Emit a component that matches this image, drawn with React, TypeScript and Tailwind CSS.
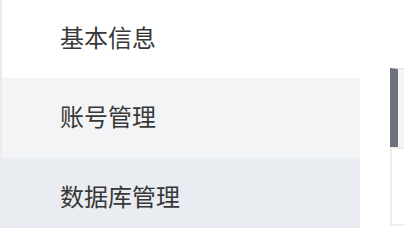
import React from "react";

const items = [
  { label: "基本信息", bg: "bg-white", h: "h-[78px]" },
  { label: "账号管理", bg: "bg-[#f3f4f6]", h: "h-20" },
  { label: "数据库管理", bg: "bg-[#e9ecf0]", h: "h-20" },
];

export default function App() {
  return (
    <div
      className="flex w-[404px] h-[228px] overflow-hidden bg-white text-[#383838]"
      style={{ fontFamily: '"Noto Sans CJK SC", "Noto Sans", sans-serif' }}
    >
      <div className="flex flex-col w-[360px] shrink-0 border-l-2 border-[#ebebeb]">
        {items.map((it) => (
          <div
            key={it.label}
            className={`flex items-center shrink-0 pl-[58px] pb-[4px] text-[24px] leading-none ${it.bg} ${it.h}`}
          >
            {it.label}
          </div>
        ))}
      </div>
      <div className="ml-[30px] mt-[68px] w-[200px] shrink-0 flex flex-col">
        <div className="h-[79px] bg-[#f3f4f6] border-t border-[#e3e5e8] border-l-[8px] border-l-[#6b727c]" />
        <div className="h-[79px] bg-white border-2 border-[#ededed]" />
      </div>
    </div>
  );
}
